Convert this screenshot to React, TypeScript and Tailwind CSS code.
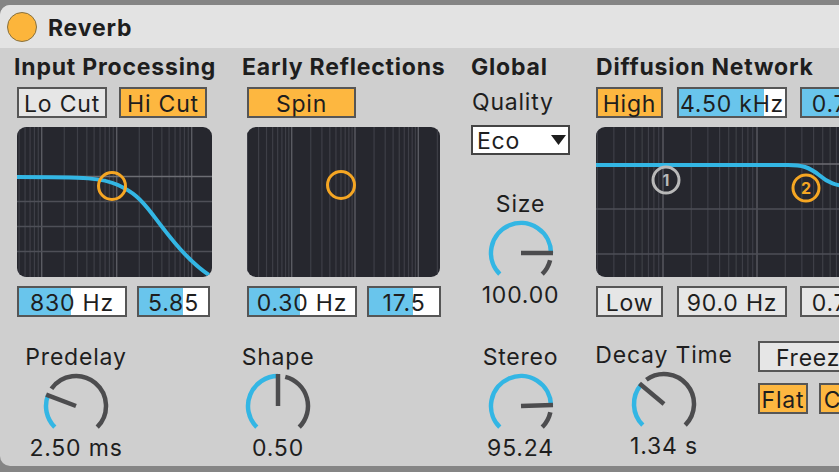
import React from "react";

const BLUE = "#33b6e4";
const GRAY = "#4c4c4e";
const ORANGE_MK = "#f5a623";

function pt(a: number, r: number, c = 33): [number, number] {
  const rad = (a * Math.PI) / 180;
  return [c + r * Math.sin(rad), c - r * Math.cos(rad)];
}

function arc(a1: number, a2: number, r = 30) {
  const [x1, y1] = pt(a1, r);
  const [x2, y2] = pt(a2, r);
  const large = a2 - a1 > 180 ? 1 : 0;
  return `M${x1} ${y1} A${r} ${r} 0 ${large} 1 ${x2} ${y2}`;
}

function Knob({ v }: { v: number }) {
  const [nx, ny] = pt(v, 32);
  return (
    <svg width={66} height={64} viewBox="0 0 66 64" className="block mt-[3px]">
      <path d={arc(-135, v)} stroke={BLUE} strokeWidth={4.5} fill="none" />
      <path d={arc(v + 14, 135)} stroke={GRAY} strokeWidth={4.5} fill="none" />
      <line x1={33} y1={33} x2={nx} y2={ny} stroke={GRAY} strokeWidth={4.5} />
    </svg>
  );
}

function KnobBlock({
  label,
  value,
  angle,
  className,
}: {
  label: string;
  value: string;
  angle: number;
  className: string;
}) {
  return (
    <div className={`flex flex-col items-center shrink-0 ${className}`}>
      <div className="h-[26px] leading-[26px] text-[23px] tracking-[0.8px] whitespace-nowrap">{label}</div>
      <Knob v={angle} />
      <div className="h-[22px] leading-[22px] text-[23px] tracking-[0.8px] whitespace-nowrap">{value}</div>
    </div>
  );
}

function Btn({ className, children }: { className: string; children: React.ReactNode }) {
  return (
    <div
      className={`h-[31px] shrink-0 border-2 border-[#565656] pt-[3px] flex items-center justify-center text-[23px] tracking-[0.8px] leading-none whitespace-nowrap ${className}`}
    >
      {children}
    </div>
  );
}

function ValueBox({ className, fill, children }: { className: string; fill: number; children: React.ReactNode }) {
  return (
    <div
      className={`h-[31px] shrink-0 border-2 border-[#565656] pt-[3px] flex items-center justify-center text-[23px] tracking-[0.8px] leading-none whitespace-nowrap ${className}`}
      style={{ background: `linear-gradient(to right, #69c5ec ${fill}%, #ffffff ${fill}%)` }}
    >
      {children}
    </div>
  );
}

function Graph({
  w,
  h,
  bright,
  D,
  hlines,
  zero,
  className,
  children,
}: {
  w: number;
  h: number;
  bright: number;
  D: number;
  hlines: number[];
  zero?: number;
  className: string;
  children?: React.ReactNode;
}) {
  const minor: number[] = [];
  const major: number[] = [];
  for (let b = bright - D; b < w; b += D) {
    for (let k = 1; k <= 9; k++) {
      const x = b + Math.log10(k) * D;
      if (x <= 0 || x >= w) continue;
      (k === 1 ? major : minor).push(x);
    }
  }
  return (
    <div className={`rounded-[9px] overflow-hidden bg-[#26272e] shrink-0 ${className}`}>
      <svg width={w} height={h} viewBox={`0 0 ${w} ${h}`} className="block">
        {minor.map((x, i) => (
          <line key={"m" + i} x1={x} y1={0} x2={x} y2={h} stroke="#3e3f47" strokeWidth={1.2} />
        ))}
        {major.map((x, i) => (
          <line key={"M" + i} x1={x} y1={0} x2={x} y2={h} stroke="#5a5b62" strokeWidth={1.4} />
        ))}
        {hlines.map((y, i) => (
          <line key={"h" + i} x1={0} y1={y} x2={w} y2={y} stroke="#4e4f57" strokeWidth={1.3} />
        ))}
        {zero !== undefined && <line x1={0} y1={zero} x2={w} y2={zero} stroke="#6c6d73" strokeWidth={1.3} />}
        {children}
      </svg>
    </div>
  );
}

export default function App() {
  return (
    <div className="w-[839px] h-[472px] bg-[#858585] pt-[5px] overflow-hidden font-['Inter','Noto_Sans',sans-serif] text-[#1e1e1e]">
      <div className="h-[461px] bg-[#cfcfcf] rounded-l-[10px] overflow-hidden flex flex-col">
        {/* Title bar */}
        <div className="h-[43px] shrink-0 bg-[#e3e3e3] flex items-center pl-[7px] gap-[11px]">
          <div className="w-[30px] h-[30px] rounded-full bg-[#fcb53b] border-[1.5px] border-[#86703f]" />
          <span className="mt-[3px] text-[23px] tracking-[0.8px] font-bold leading-none">Reverb</span>
        </div>

        {/* Body */}
        <div className="flex pt-[7px] pl-[17px]">
          {/* Input Processing */}
          <div className="w-[195px] shrink-0 flex flex-col">
            <div className="h-[289px] flex flex-col">
              <h2 className="-ml-[3px] h-[24px] leading-[24px] text-[23px] tracking-[0.8px] font-bold whitespace-nowrap">
                Input Processing
              </h2>
              <div className="mt-[8px] flex gap-[12px]">
                <Btn className="w-[90px] bg-[#e6e6e6]">Lo Cut</Btn>
                <Btn className="w-[88px] bg-[#fdb740]">Hi Cut</Btn>
              </div>
              <Graph className="mt-[9px]" w={195} h={150} bright={24.7} D={75} hlines={[74.5, 99.5, 124.5]} zero={49.5}>
                <path
                  d="M0 50 C 70 50, 86 51, 101 58 C 116 65, 123 71, 136 88 C 151 108, 171 135, 195 150"
                  stroke={BLUE}
                  strokeWidth={4}
                  fill="none"
                />
                <circle cx={95} cy={59} r={13.5} stroke={ORANGE_MK} strokeWidth={3} fill="none" />
              </Graph>
              <div className="mt-[9px] flex gap-[10px]">
                <ValueBox className="w-[110px]" fill={49}>830 Hz</ValueBox>
                <ValueBox className="w-[73px]" fill={64}>5.85</ValueBox>
              </div>
            </div>
            <KnobBlock className="w-[118px]" label="Predelay" value="2.50 ms" angle={-69} />
          </div>

          {/* Early Reflections */}
          <div className="ml-[35px] w-[193px] shrink-0 flex flex-col">
            <div className="h-[289px] flex flex-col">
              <h2 className="-ml-[5px] h-[24px] leading-[24px] text-[23px] tracking-[0.8px] font-bold whitespace-nowrap">
                Early Reflections
              </h2>
              <div className="mt-[8px] flex">
                <Btn className="w-[109px] bg-[#fdb740]">Spin</Btn>
              </div>
              <Graph className="mt-[9px]" w={193} h={150} bright={44.7} D={63.3} hlines={[]}>
                <circle cx={94} cy={58} r={13.5} stroke={ORANGE_MK} strokeWidth={3} fill="none" />
              </Graph>
              <div className="mt-[9px] flex gap-[10px]">
                <ValueBox className="w-[110px]" fill={48}>0.30 Hz</ValueBox>
                <ValueBox className="w-[74px]" fill={63}>17.5</ValueBox>
              </div>
            </div>
            <KnobBlock className="w-[62px]" label="Shape" value="0.50" angle={0} />
          </div>

          {/* Global */}
          <div className="ml-[31px] w-[99px] shrink-0 flex flex-col">
            <div className="h-[289px] flex flex-col">
              <h2 className="h-[24px] leading-[24px] text-[23px] tracking-[0.8px] font-bold whitespace-nowrap">Global</h2>
              <div className="mt-[10px] h-[26px] leading-[26px] text-[23px] tracking-[0.8px] pl-[1px]">Quality</div>
              <div className="mt-[10px] w-[99px] h-[30px] border-2 border-[#444] bg-white flex items-center justify-between pl-[4px] pr-[2px]">
                <span className="mt-[3px] text-[23px] tracking-[0.8px] leading-none">Eco</span>
                <svg width={15} height={10} viewBox="0 0 15 10" className="block">
                  <path d="M0 0 H15 L7.5 10 Z" fill="#1e1e1e" />
                </svg>
              </div>
              <KnobBlock className="mt-[36px] w-[99px]" label="Size" value="100.00" angle={90} />
            </div>
            <KnobBlock className="w-[99px]" label="Stereo" value="95.24" angle={88} />
          </div>

          {/* Diffusion Network */}
          <div className="ml-[26px] w-[270px] shrink-0 flex flex-col">
            <div className="h-[289px] flex flex-col">
              <h2 className="h-[24px] leading-[24px] text-[23px] tracking-[0.8px] font-bold whitespace-nowrap">
                Diffusion Network
              </h2>
              <div className="mt-[8px] flex">
                <Btn className="w-[67px] bg-[#fdb740]">High</Btn>
                <ValueBox className="ml-[14px] w-[110px]" fill={80}>4.50 kHz</ValueBox>
                <ValueBox className="ml-[13px] w-[74px]" fill={70}>0.70</ValueBox>
              </div>
              <Graph className="mt-[9px]" w={262} h={150} bright={67} D={94} hlines={[82, 127]} zero={37}>
                <path
                  d="M0 38 L 192 38 C 206 38, 213 40, 223 48 C 231 55, 238 59, 262 61"
                  stroke={BLUE}
                  strokeWidth={4}
                  fill="none"
                />
                <circle cx={70} cy={53} r={13} stroke="#b9b9b9" strokeWidth={3} fill="none" />
                <text x={70} y={59} textAnchor="middle" fontSize={16} fontWeight={700} fill="#b9b9b9">
                  1
                </text>
                <circle cx={210} cy={61} r={13} stroke={ORANGE_MK} strokeWidth={3} fill="none" />
                <text x={210} y={67} textAnchor="middle" fontSize={16} fontWeight={700} fill={ORANGE_MK}>
                  2
                </text>
              </Graph>
              <div className="mt-[9px] flex">
                <Btn className="w-[67px] bg-[#e6e6e6]">Low</Btn>
                <Btn className="ml-[14px] w-[110px] bg-[#e6e6e6]">90.0 Hz</Btn>
                <Btn className="ml-[13px] w-[74px] bg-[#e6e6e6]">0.70</Btn>
              </div>
            </div>
            <div className="flex">
              <KnobBlock className="-mt-[2px] w-[136px]" label="Decay Time" value="1.34 s" angle={-50} />
              <div className="ml-[26px] -mt-[3px] flex flex-col">
                <Btn className="w-[114px] bg-[#e6e6e6]">Freeze</Btn>
                <div className="mt-[11px] flex gap-[11px]">
                  <Btn className="w-[50px] h-[30px] bg-[#fdb740]">Flat</Btn>
                  <Btn className="w-[50px] h-[30px] bg-[#fdb740]">Cut</Btn>
                </div>
              </div>
            </div>
          </div>
        </div>
      </div>
    </div>
  );
}
